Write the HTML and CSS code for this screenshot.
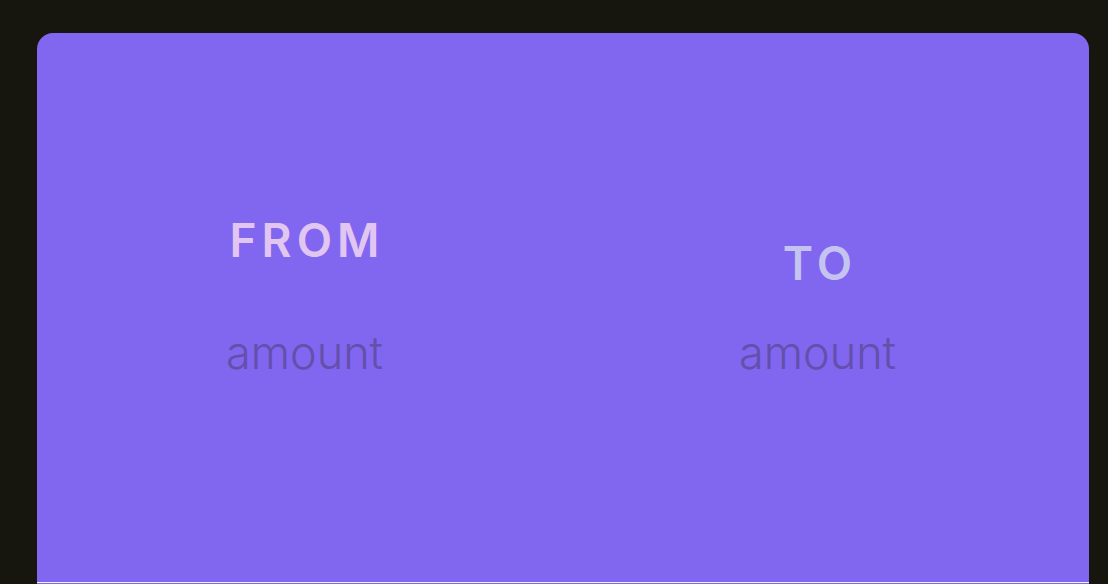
FILE: index.html
```html
<!DOCTYPE html>
<html lang="en">

<head>
    <meta charset="UTF-8">
    <meta name="viewport" content="width=device-width, initial-scale=1.0">
    <title>Converter</title>
    <link rel="stylesheet" href="styles.css">
</head>

<body>
    <div class="card">
        <div class="fields">
            <div class="field">
                <h2 class="label label-from">FROM</h2>
                <input type="text" class="amount" placeholder="amount">
            </div>
            <div class="field">
                <h2 class="label label-to">TO</h2>
                <input type="text" class="amount" placeholder="amount">
            </div>
        </div>
        <div class="bottom"></div>
    </div>
</body>

</html>
```

FILE: styles.css
```css
* {
    margin: 0;
    padding: 0;
    box-sizing: border-box;
}

body {
    background-color: #16160f;
    font-family: Inter, "Noto Sans", sans-serif;
    padding: 33px 19px 0 37px;
    height: 584px;
    overflow: hidden;
}

.card {
    background-color: #8166f0;
    border-radius: 16px 16px 0 0;
    height: 700px;
    padding: 0 27px 0 23px;
}

.fields {
    display: grid;
    grid-template-columns: 1fr 1fr;
    gap: 24px;
    padding-top: 179px;
    height: 549px;
}

.field {
    display: flex;
    flex-direction: column;
    align-items: center;
}

.label {
    font-size: 46px;
    font-weight: 600;
    line-height: 56px;
    letter-spacing: 5px;
    padding-left: 5px;
}

.label-from {
    color: #e2c6f2;
    margin-bottom: 59px;
}

.label-to {
    color: #c5c4f1;
    margin-top: 23px;
    margin-bottom: 36px;
}

.amount {
    width: 100%;
    background: transparent;
    border: none;
    outline: none;
    text-align: center;
    font-family: Inter, "Noto Sans", sans-serif;
    font-size: 45px;
    font-weight: 300;
    line-height: 52px;
    color: #5c4aa6;
}

.amount::placeholder {
    color: #6350ab;
}

.bottom {
    border-top: 1px solid #f2f0f5;
    margin: 0 -27px 0 -23px;
}
```
